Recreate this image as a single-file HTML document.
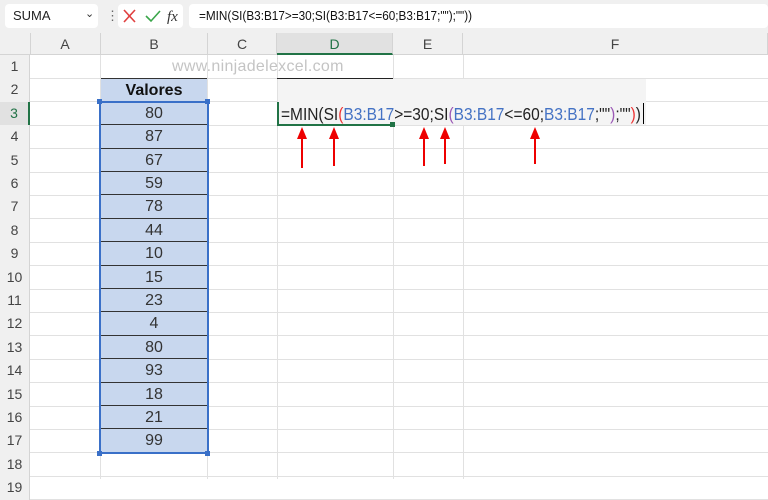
<!DOCTYPE html>
<html><head><meta charset="utf-8"><style>
*{margin:0;padding:0;box-sizing:border-box}
body{width:768px;height:479px;overflow:hidden;background:#fff;font-family:"Liberation Sans",sans-serif;position:relative}
.a{position:absolute}
.tb{left:0;top:0;width:768px;height:33px;background:#f0f0f0}
.box{background:#fff;border-radius:4px;height:24px;top:4px}
.hdr{top:33px;height:22px;background:#f0f0f0;border-bottom:1px solid #d4d4d4;left:0;width:768px}
.ch{top:33px;height:22px;border-right:1px solid #d4d4d4;text-align:center;font-size:14px;line-height:22px;color:#444}
.rh{left:0;width:30px;background:#f0f0f0;border-right:1px solid #d4d4d4;text-align:center;font-size:14px;color:#444}
.hl{left:30px;width:738px;height:1px;background:#e1e1e1}
.vl{top:55px;height:424px;width:1px;background:#e1e1e1}
.bc{left:101px;width:106px;text-align:center;font-size:16px;color:#333;background:#c8d7ee}
.ar{width:2px;background:#e00}
.ah{width:0;height:0;border-left:5px solid transparent;border-right:5px solid transparent;border-bottom:12px solid #e00}
</style></head><body>
<div class="a tb"></div>
<div class="a box" style="left:5px;width:93px"><span class="a" style="left:8px;top:4px;font-size:13px;color:#222">SUMA</span><span class="a" style="left:80px;top:3px;font-size:11px;color:#333">⌄</span></div>
<div class="a" style="left:106px;top:8px;font-size:13px;color:#666">⋮</div>
<div class="a box" style="left:118px;width:65px"></div>
<svg class="a" style="left:122px;top:8px" width="60" height="16"><path d="M2 2L13 14M13 2L2 14" stroke="#e04040" stroke-width="1.6"/><path d="M24 8L29 13L38 3" stroke="#3aa64a" stroke-width="1.6" fill="none"/><text x="45" y="13" font-family="Liberation Serif" font-style="italic" font-size="15" fill="#333">fx</text></svg>
<div class="a box" style="left:189px;width:579px"><span class="a" style="left:10px;top:5px;font-size:12.5px;color:#111;white-space:nowrap;transform:scaleX(0.94);transform-origin:left">=MIN(SI(B3:B17&gt;=30;SI(B3:B17&lt;=60;B3:B17;"");""))</span></div>
<div class="a hdr"></div>
<div class="a" style="left:30px;top:33px;width:1px;height:22px;background:#d4d4d4"></div>
<div class="a ch" style="left:30px;width:71px">A</div>
<div class="a ch" style="left:101px;width:107px">B</div>
<div class="a ch" style="left:208px;width:69px">C</div>
<div class="a ch" style="left:277px;width:116px;color:#217346;background:#e1e1e1;border-bottom:2px solid #217346">D</div>
<div class="a ch" style="left:393px;width:70px">E</div>
<div class="a ch" style="left:463px;width:305px">F</div>
<div class="a vl" style="left:100px"></div><div class="a vl" style="left:207px"></div><div class="a vl" style="left:277px"></div><div class="a vl" style="left:393px"></div><div class="a vl" style="left:463px"></div>
<div id="rows"></div>
<script>
var h='';var vals=['','','Valores',80,87,67,59,78,44,10,15,23,4,80,93,18,21,99,''];
for(var i=1;i<=19;i++){var t=55+(i-1)*23.4;
h+='<div class="a rh" style="top:'+t+'px;height:23.4px;line-height:23.4px;'+(i==3?'color:#217346;background:#e1e1e1;border-right:2px solid #217346':'')+'">'+i+'</div>';
h+='<div class="a hl" style="top:'+(t+23)+'px"></div>';
if(i>=2&&i<=17){h+='<div class="a bc" style="top:'+(t)+'px;height:23.4px;line-height:23.4px;border-bottom:1px solid #333;'+(i==2?'font-weight:bold;color:#111;border-top:1px solid #333':'')+'">'+vals[i]+'</div>';}}
document.getElementById('rows').innerHTML=h;
</script>
<div class="a" style="left:99px;top:101px;width:110px;height:353px;border:2px solid #3a70c8"></div>
<div class="a" style="left:97px;top:99px;width:5px;height:5px;background:#3a70c8"></div>
<div class="a" style="left:205px;top:99px;width:5px;height:5px;background:#3a70c8"></div>
<div class="a" style="left:97px;top:451px;width:5px;height:5px;background:#3a70c8"></div>
<div class="a" style="left:205px;top:451px;width:5px;height:5px;background:#3a70c8"></div>
<div class="a" style="left:172px;top:58px;font-size:16px;color:#c4c4c4;letter-spacing:0.3px">www.ninjadelexcel.com</div>
<div class="a" style="left:277px;top:78px;width:116px;height:1px;background:#222"></div>
<div class="a" style="left:278px;top:79px;width:368px;height:46px;background:#f4f4f4"></div>
<div class="a" style="left:277px;top:102px;width:2px;height:23px;background:#217346"></div>
<div class="a" style="left:277px;top:124px;width:116px;height:2px;background:#217346"></div>
<div class="a" style="left:390px;top:122px;width:5px;height:5px;background:#217346"></div>
<div class="a" style="left:281px;top:102px;font-size:17.5px;color:#222;white-space:nowrap;line-height:24px;transform:scaleX(0.885);transform-origin:left">=MIN(SI<span style="color:#e33">(</span><span style="color:#4472c4">B3:B17</span>&gt;=30;SI<span style="color:#9b59b6">(</span><span style="color:#4472c4">B3:B17</span>&lt;=60;<span style="color:#4472c4">B3:B17</span>;""<span style="color:#9b59b6">)</span>;""<span style="color:#e33">)</span>)</div>
<div class="a" style="left:643px;top:103px;width:1px;height:21px;background:#000"></div>
<div class="a ah" style="left:297px;top:127px"></div><div class="a ar" style="left:301px;top:138px;height:30px"></div>
<div class="a ah" style="left:329px;top:127px"></div><div class="a ar" style="left:333px;top:138px;height:28px"></div>
<div class="a ah" style="left:419px;top:127px"></div><div class="a ar" style="left:423px;top:138px;height:28px"></div>
<div class="a ah" style="left:440px;top:127px"></div><div class="a ar" style="left:444px;top:138px;height:26px"></div>
<div class="a ah" style="left:530px;top:127px"></div><div class="a ar" style="left:534px;top:138px;height:26px"></div>
</body></html>
